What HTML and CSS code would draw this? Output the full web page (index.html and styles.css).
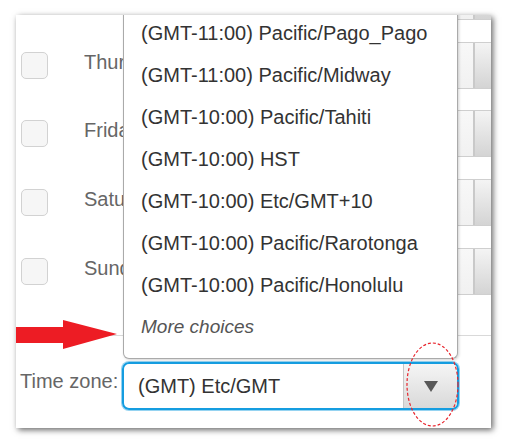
FILE: index.html
```html
<!DOCTYPE html>
<html>
<head>
<meta charset="utf-8">
<link rel="stylesheet" href="styles.css">
</head>
<body>
<div class="panel">
  <div class="days">
    <div class="day">
      <span class="check"></span><span class="day-label">Wednesday</span>
      <div class="btns"><span class="btn-a"></span><span class="btn-b"></span></div>
    </div>
    <div class="day">
      <span class="check"></span><span class="day-label">Thursday</span>
      <div class="btns"><span class="btn-a"></span><span class="btn-b"></span></div>
    </div>
    <div class="day">
      <span class="check"></span><span class="day-label">Friday</span>
      <div class="btns"><span class="btn-a"></span><span class="btn-b"></span></div>
    </div>
    <div class="day">
      <span class="check"></span><span class="day-label">Saturday</span>
      <div class="btns"><span class="btn-a"></span><span class="btn-b"></span></div>
    </div>
    <div class="day">
      <span class="check"></span><span class="day-label">Sunday</span>
      <div class="btns"><span class="btn-a"></span><span class="btn-b"></span></div>
    </div>
  </div>
  <div class="tz-section">
    <div class="tz-row">
      <span class="tz-label">Time zone:</span>
      <div class="select">
        <span class="select-value">(GMT) Etc/GMT</span>
        <span class="select-btn"><span class="tri"></span></span>
      </div>
    </div>
  </div>

  <ul class="dropdown">
    <li>(GMT-11:00) Pacific/Pago_Pago</li>
    <li>(GMT-11:00) Pacific/Midway</li>
    <li>(GMT-10:00) Pacific/Tahiti</li>
    <li>(GMT-10:00) HST</li>
    <li>(GMT-10:00) Etc/GMT+10</li>
    <li>(GMT-10:00) Pacific/Rarotonga</li>
    <li>(GMT-10:00) Pacific/Honolulu</li>
    <li class="more">More choices</li>
  </ul>

  <svg class="arrow" width="101" height="30" viewBox="0 0 101 30">
    <polygon points="0,7 47,7 47,0 101,14 47,29 47,23 0,23" fill="#ed1c24"/>
  </svg>
  <svg class="ellipse" width="53" height="85" viewBox="0 0 53 85">
    <ellipse cx="26.5" cy="42.5" rx="25.5" ry="41.5" fill="none" stroke="#e8262e" stroke-width="1.2" stroke-dasharray="3 2"/>
  </svg>
</div>
</body>
</html>
```

FILE: styles.css
```css
* { box-sizing: border-box; }
html, body { margin: 0; background: #fff; }
body {
  padding: 15px 16px;
  font-family: "Liberation Sans", Arial, sans-serif;
}
.panel {
  position: relative;
  width: 475px;
  height: 413px;
  background: #fff;
  overflow: hidden;
  box-shadow: 2px 2px 6px rgba(0,0,0,0.6);
}
.days {
  margin-top: -53px;
  display: flex;
  flex-direction: column;
}
.day {
  height: 68.7px;
  display: flex;
  align-items: center;
  padding-left: 5px;
}
.check {
  width: 27px;
  height: 27px;
  border: 1px solid #d2d2d2;
  border-radius: 5px;
  background: #f6f6f6;
  flex: none;
}
.day-label {
  margin-left: 36px;
  width: 39px;
  font-size: 20px;
  color: #666;
  flex: none;
  margin-top: -6px;
  white-space: nowrap;
  overflow: hidden;
}
.spacer { flex: 1; }
.btns {
  display: flex;
  width: 156px;
  height: 47px;
  margin-left: auto;
  margin-right: -45px;
  border-top: 1px solid #cfcfcf;
  border-bottom: 1px solid #cfcfcf;
  flex: none;
}
.btn-a {
  width: 95px;
  background: linear-gradient(#f8f8f8, #f1f1f1);
  border-left: 1px solid #cfcfcf;
  border-right: 2px solid #c9c9c9;
}
.btn-b {
  flex: 1;
  background: linear-gradient(#f4f4f4, #d4d4d4);
}
.tz-section {
  margin-top: 29.5px;
  border-top: 1px solid #d9d9d9;
  padding-top: 26px;
}
.tz-row {
  display: flex;
  align-items: flex-start;
  padding-left: 4px;
}
.tz-label {
  width: 102px;
  font-size: 20px;
  line-height: 24px;
  padding-top: 7px;
  color: #666;
}
.select {
  width: 337px;
  height: 48px;
  display: flex;
  border: 2px solid #159de0;
  border-radius: 7px;
  box-shadow: 0 0 0 1px rgba(21,157,224,0.45);
  overflow: hidden;
}
.select-value {
  flex: 1;
  padding-left: 14px;
  font-size: 20px;
  line-height: 44px;
  color: #333;
}
.select-btn {
  width: 54px;
  border-left: 1px solid #c6c6c6;
  background: linear-gradient(#f5f5f5, #d9d9d9);
  display: flex;
  align-items: center;
  justify-content: center;
}
.tri {
  width: 0;
  height: 0;
  border-left: 7px solid transparent;
  border-right: 7px solid transparent;
  border-top: 11px solid #585858;
  margin-top: 2px;
}
.dropdown {
  position: absolute;
  left: 107px;
  top: -3px;
  width: 335px;
  margin: 0;
  padding: 0 0 10px 0;
  list-style: none;
  background: #fff;
  border: 1px solid #aaa;
  border-top: none;
  border-radius: 0 0 6px 6px;
  box-shadow: 1px 1px 3px rgba(0,0,0,0.18);
}
.dropdown li {
  padding-left: 17px;
  height: 42px;
  line-height: 42px;
  font-size: 20px;
  color: #333;
  white-space: nowrap;
}
.dropdown li.more {
  font-style: italic;
  font-size: 19px;
  color: #555;
}
.arrow {
  position: absolute;
  left: 0;
  top: 305px;
}
.ellipse {
  position: absolute;
  left: 390px;
  top: 327px;
}
```
